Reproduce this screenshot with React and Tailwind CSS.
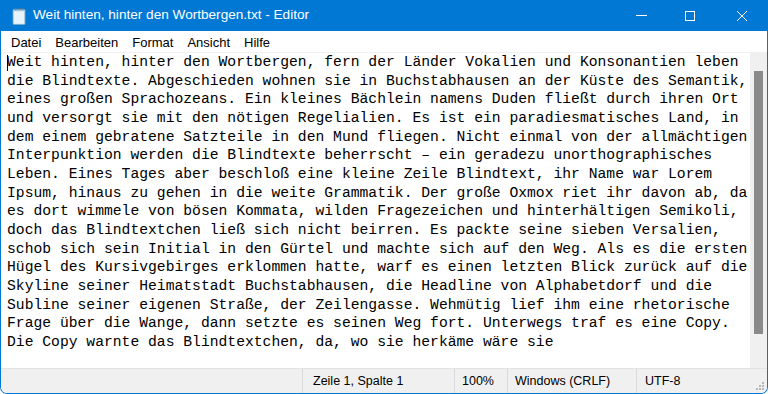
import React from 'react';

const lines = [
  'Weit hinten, hinter den Wortbergen, fern der Länder Vokalien und Konsonantien leben',
  'die Blindtexte. Abgeschieden wohnen sie in Buchstabhausen an der Küste des Semantik,',
  'eines großen Sprachozeans. Ein kleines Bächlein namens Duden fließt durch ihren Ort',
  'und versorgt sie mit den nötigen Regelialien. Es ist ein paradiesmatisches Land, in',
  'dem einem gebratene Satzteile in den Mund fliegen. Nicht einmal von der allmächtigen',
  'Interpunktion werden die Blindtexte beherrscht – ein geradezu unorthographisches',
  'Leben. Eines Tages aber beschloß eine kleine Zeile Blindtext, ihr Name war Lorem',
  'Ipsum, hinaus zu gehen in die weite Grammatik. Der große Oxmox riet ihr davon ab, da',
  'es dort wimmele von bösen Kommata, wilden Fragezeichen und hinterhältigen Semikoli,',
  'doch das Blindtextchen ließ sich nicht beirren. Es packte seine sieben Versalien,',
  'schob sich sein Initial in den Gürtel und machte sich auf den Weg. Als es die ersten',
  'Hügel des Kursivgebirges erklommen hatte, warf es einen letzten Blick zurück auf die',
  'Skyline seiner Heimatstadt Buchstabhausen, die Headline von Alphabetdorf und die',
  'Subline seiner eigenen Straße, der Zeilengasse. Wehmütig lief ihm eine rhetorische',
  'Frage über die Wange, dann setzte es seinen Weg fort. Unterwegs traf es eine Copy.',
  'Die Copy warnte das Blindtextchen, da, wo sie herkäme wäre sie',
];

const menu = ['Datei', 'Bearbeiten', 'Format', 'Ansicht', 'Hilfe'];

const NotepadIcon = () => (
  <svg width="16" height="18" viewBox="0 0 16 18">
    <rect x="2" y="2.5" width="12" height="15" rx="1" fill="#cfe6f5" stroke="#7fa9c6" strokeWidth="0.8" />
    <rect x="3" y="3.5" width="10" height="13" fill="#e8f3fb" />
    {[4, 6.5, 9, 11.5].map((x) => (
      <rect key={x} x={x} y="1" width="1" height="3" fill="#5b7f99" />
    ))}
    <rect x="2" y="3" width="12" height="1.2" fill="#9cc2dc" />
  </svg>
);

export default function App() {
  return (
    <div className="w-[768px] h-[394px] bg-white">
      <div className="flex flex-col h-[394px] border border-t-0 border-[#0078d4] rounded-b-[7px] overflow-hidden">
        {/* title bar */}
        <div className="h-[31px] bg-[#0078d4] flex items-center text-white -mx-px">
          <div className="pl-[11px] pr-[6px] flex items-center">
            <NotepadIcon />
          </div>
          <span className="text-[13.6px] font-['Liberation_Sans',sans-serif]">
            Weit hinten, hinter den Wortbergen.txt - Editor
          </span>
          <div className="ml-auto flex h-full">
            <div className="w-[46px] flex items-center justify-center">
              <div className="w-[11px] h-px bg-white" />
            </div>
            <div className="w-[52px] flex items-center justify-center">
              <div className="w-[10px] h-[10px] border border-white" />
            </div>
            <div className="w-[52px] flex items-center justify-center">
              <svg width="12" height="12" viewBox="0 0 12 12">
                <path d="M1 1 L11 11 M11 1 L1 11" stroke="white" strokeWidth="1" />
              </svg>
            </div>
          </div>
        </div>

        {/* menu bar */}
        <div className="h-[22px] flex items-center pl-[3px] pt-[2px] text-[13px] text-black font-['Liberation_Sans',sans-serif] border-b border-[#f0f0f0]">
          {menu.map((m) => (
            <span key={m} className="px-[7px]">{m}</span>
          ))}
        </div>

        {/* editor */}
        <div className="flex flex-1 min-h-0">
          <div className="flex-1 relative pl-[6px] font-['Liberation_Mono',monospace] text-[14.7px] leading-[18.67px] text-black whitespace-pre overflow-hidden">
            <div className="absolute left-[6px] top-[2px] w-px h-[16px] bg-black" />
            {lines.map((l, i) => (
              <div key={i}>{l}</div>
            ))}
          </div>
          <div className="w-[17px] bg-[#f0f0f0] flex flex-col pt-[18px] pb-[34px] items-center">
            <div className="w-[9px] flex-1 bg-[#8a8a8a]" />
          </div>
        </div>

        {/* status bar */}
        <div className="h-[25px] bg-[#f0f0f0] border-t border-[#e3e3e3] flex text-[12.5px] text-black font-['Liberation_Sans',sans-serif] relative">
          <div className="w-[302px] border-r border-[#dadada]" />
          <div className="w-[152px] border-r border-[#dadada] pl-[10px] flex items-center">Zeile 1, Spalte 1</div>
          <div className="w-[53px] border-r border-[#dadada] pl-[7px] flex items-center">100%</div>
          <div className="w-[129px] border-r border-[#dadada] pl-[7px] flex items-center">Windows (CRLF)</div>
          <div className="flex-1 pl-[8px] flex items-center">UTF-8</div>
          <svg className="absolute right-[2px] bottom-[2px]" width="10" height="10" viewBox="0 0 10 10">
            {[[8, 2], [8, 5], [5, 5], [8, 8], [5, 8], [2, 8]].map(([x, y]) => (
              <rect key={`${x}-${y}`} x={x - 1} y={y - 1} width="2" height="2" fill="#b8b8b8" />
            ))}
          </svg>
        </div>
      </div>
    </div>
  );
}
